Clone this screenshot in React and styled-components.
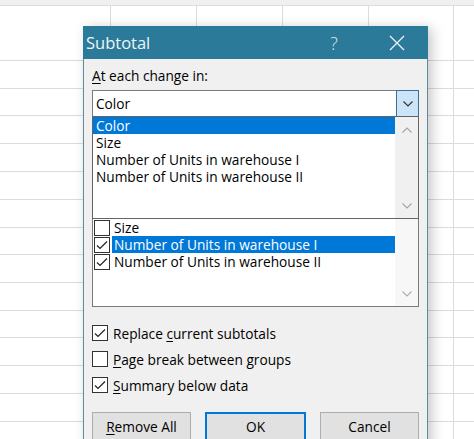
import React from 'react';
import styled, { createGlobalStyle } from 'styled-components';

const GlobalStyle = createGlobalStyle`
  html, body {
    margin: 0;
    padding: 0;
  }
  body {
    width: 474px;
    height: 439px;
    overflow: hidden;
    background: #fff;
    font-family: "Open Sans", "Noto Sans", sans-serif;
  }
`;

const line = (at, color) =>
  `transparent ${at}px, ${color} ${at}px, ${color} ${at + 1}px, transparent ${at + 1}px`;

const rowLines = [5, 60, 88, 115, 143, 171, 199, 227, 254, 282, 310, 337, 365, 393, 421]
  .map((y) => line(y, '#dcdcdc'))
  .join(', ');
const colLines = [110, 196, 282, 368, 453].map((x) => line(x, '#dcdcdc')).join(', ');

const Sheet = styled.div`
  width: 474px;
  height: 439px;
  overflow: hidden;
  box-sizing: border-box;
  padding: 26px 0 0 83px;
  background-color: #fff;
  background-image:
    linear-gradient(to bottom, #eef0f2 0, #eef0f2 5px, transparent 5px),
    linear-gradient(to right, ${colLines}),
    linear-gradient(to bottom, ${rowLines});
`;

const Dialog = styled.div`
  width: 345px;
  height: 440px;
  box-sizing: border-box;
  background: #f0f0f0;
  border: 1px solid #5f8c9c;
  border-top: none;
  box-shadow: 4px 2px 12px rgba(0, 0, 0, 0.22);
`;

const TitleBar = styled.div`
  height: 33px;
  margin: 0 -1px;
  background: #2c7a99;
  color: #eef5f8;
  display: flex;
  align-items: center;
  padding-right: 8px;
`;

const Title = styled.div`
  flex: 1;
  font-size: 16.5px;
  padding-left: 3px;
`;

const HelpButton = styled.div`
  width: 30px;
  text-align: center;
  font-size: 18px;
  font-weight: 300;
  color: #d8e8ee;
`;

const CloseButton = styled.div`
  width: 46px;
  margin-left: 25px;
  display: flex;
  justify-content: center;
  align-items: center;
`;

const Body = styled.div`
  padding: 7px 8px 0 8px;
  font-size: 13.7px;
  color: #000;
`;

const Label = styled.div`
  line-height: 20px;
  height: 20px;
  white-space: nowrap;
`;

const Key = styled.span`
  text-decoration: underline;
  text-underline-offset: 2px;
`;

const ComboWrap = styled.div`
  position: relative;
  margin-top: 4px;
  z-index: 2;
`;

const Combo = styled.div`
  height: 27px;
  box-sizing: border-box;
  border: 1px solid #7a7a7a;
  background: #fff;
  display: flex;
  align-items: center;
`;

const ComboText = styled.div`
  flex: 1;
  padding-left: 3px;
`;

const ComboButton = styled.div`
  width: 23px;
  height: 27px;
  margin: -1px -1px -1px 0;
  box-sizing: border-box;
  border: 1px solid #3f6f92;
  background: #cce4f7;
  display: flex;
  align-items: center;
  justify-content: center;
`;

const DropList = styled.div`
  position: absolute;
  left: 0;
  right: 0;
  top: calc(100% - 1px);
  height: 103px;
  box-sizing: border-box;
  border: 1px solid #646464;
  background: #fff;
  display: flex;
`;

const Items = styled.div`
  flex: 1;
`;

const Item = styled.div`
  height: 17px;
  line-height: 17px;
  padding-left: 3px;
  white-space: nowrap;
  background: ${(p) => (p.$selected ? '#0078d7' : 'transparent')};
  color: ${(p) => (p.$selected ? '#fff' : '#000')};
`;

const ScrollBar = styled.div`
  width: 23px;
  background: ${(p) => p.$bg || '#f0f0f0'};
  display: flex;
  flex-direction: column;
  justify-content: ${(p) => (p.$bottomOnly ? 'flex-end' : 'space-between')};
  align-items: center;
  padding: ${(p) => p.$pad || '9px 0 8px'};
`;

/* the open drop-down covers this part of the dialog */
const CheckList = styled.div`
  margin-top: 100px;
  height: 90px;
  box-sizing: border-box;
  border: 1px solid #7a7a7a;
  background: #fff;
  display: flex;
  position: relative;
  z-index: 0;
`;

const CheckRow = styled.div`
  height: 17px;
  display: flex;
  align-items: center;
`;

const CheckText = styled.div`
  flex: 1;
  height: 17px;
  line-height: 17px;
  padding-left: 2px;
  white-space: nowrap;
  background: ${(p) => (p.$selected ? '#0078d7' : 'transparent')};
  color: ${(p) => (p.$selected ? '#fff' : '#000')};
`;

const Box = styled.div`
  width: ${(p) => p.$size}px;
  height: ${(p) => p.$size}px;
  box-sizing: border-box;
  border: 1px solid #333;
  background: #fff;
  margin: 0 ${(p) => p.$gap}px 0 ${(p) => p.$lead}px;
  display: flex;
  align-items: center;
  justify-content: center;
  flex-shrink: 0;
`;

const Options = styled.div`
  margin-top: 13px;
`;

const OptionRow = styled.div`
  height: 26px;
  display: flex;
  align-items: center;
  white-space: nowrap;
`;

const Buttons = styled.div`
  margin-top: 14px;
  display: flex;
  gap: 14px;
`;

const Button = styled.div`
  flex: 1;
  height: 30px;
  box-sizing: border-box;
  border: ${(p) => (p.$default ? '2px solid #0078d7' : '1px solid #adadad')};
  background: #e1e1e1;
  display: flex;
  align-items: center;
  justify-content: center;
  padding-bottom: 2px;
`;

const Chevron = ({ up, color = '#333' }) => (
  <svg width="10" height="6" viewBox="0 0 10 6">
    <polyline
      points={up ? '0.5,5.5 5,1 9.5,5.5' : '0.5,0.5 5,5 9.5,0.5'}
      fill="none"
      stroke={color}
      strokeWidth="1.2"
    />
  </svg>
);

const Check = () => (
  <svg width="14" height="14" viewBox="0 0 14 14">
    <polyline points="2,7.5 5,10.5 12,3.5" fill="none" stroke="#222" strokeWidth="1.2" />
  </svg>
);

const fields = ['Color', 'Size', 'Number of Units in warehouse I', 'Number of Units in warehouse II'];
const picked = [false, false, true, true];

export default function App() {
  return (
    <>
      <GlobalStyle />
      <Sheet>
        <Dialog>
          <TitleBar>
            <Title>Subtotal</Title>
            <HelpButton>?</HelpButton>
            <CloseButton>
              <svg width="16" height="16" viewBox="0 0 16 16">
                <path d="M1 1 L15 15 M15 1 L1 15" stroke="#eef5f8" strokeWidth="1.3" />
              </svg>
            </CloseButton>
          </TitleBar>
          <Body>
            <Label>
              <Key>A</Key>t each change in:
            </Label>
            <ComboWrap>
              <Combo>
                <ComboText>Color</ComboText>
                <ComboButton>
                  <Chevron />
                </ComboButton>
              </Combo>
              <DropList>
                <Items>
                  {fields.map((f, i) => (
                    <Item key={f} $selected={i === 0}>
                      {f}
                    </Item>
                  ))}
                </Items>
                <ScrollBar $pad="10px 0 9px">
                  <Chevron up color="#a6a6a6" />
                  <Chevron color="#a6a6a6" />
                </ScrollBar>
              </DropList>
            </ComboWrap>
            <CheckList>
              <Items style={{ paddingTop: 1 }}>
                {fields.slice(1).map((f, i) => (
                  <CheckRow key={f}>
                    <Box $size={16} $lead={1} $gap={2}>
                      {picked[i + 1] && <Check />}
                    </Box>
                    <CheckText $selected={i === 1}>{f}</CheckText>
                  </CheckRow>
                ))}
              </Items>
              <ScrollBar $bg="#f7f7f7" $bottomOnly $pad="0 0 9px">
                <Chevron color="#b0b0b0" />
              </ScrollBar>
            </CheckList>
            <Options>
              <OptionRow>
                <Box $size={16} $lead={0} $gap={5}>
                  <Check />
                </Box>
                <span>
                  Replace <Key>c</Key>urrent subtotals
                </span>
              </OptionRow>
              <OptionRow>
                <Box $size={16} $lead={0} $gap={5} />
                <span>
                  <Key>P</Key>age break between groups
                </span>
              </OptionRow>
              <OptionRow>
                <Box $size={16} $lead={0} $gap={5}>
                  <Check />
                </Box>
                <span>
                  <Key>S</Key>ummary below data
                </span>
              </OptionRow>
            </Options>
            <Buttons>
              <Button>
                <span>
                  <Key>R</Key>emove All
                </span>
              </Button>
              <Button $default>OK</Button>
              <Button>Cancel</Button>
            </Buttons>
          </Body>
        </Dialog>
      </Sheet>
    </>
  );
}
